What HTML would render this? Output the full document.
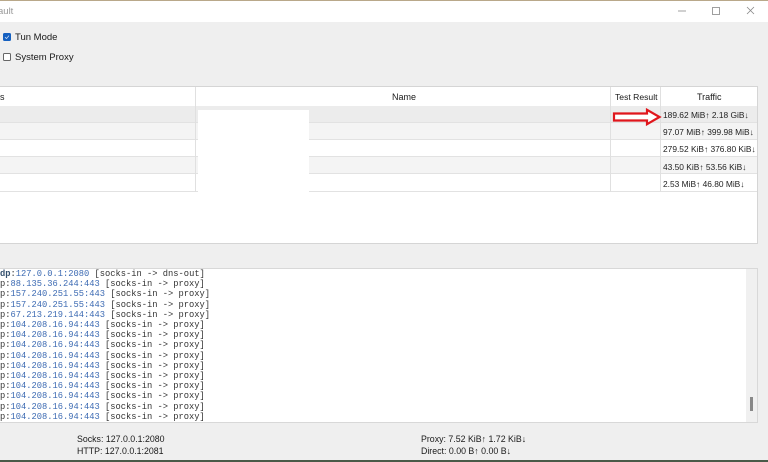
<!DOCTYPE html>
<html><head><style>
*{margin:0;padding:0;box-sizing:border-box}
body{width:768px;height:462px;background:#efefef;font-family:"Liberation Sans",sans-serif;font-size:9px;color:#1a1a1a;position:relative;overflow:hidden}
.a{position:absolute}
.mono{font-family:"Liberation Mono",monospace;font-size:8.75px;line-height:10.2px;white-space:pre;color:#333}
.b{color:#3d6bb3}
.row{position:absolute;left:0;width:757px;height:17px;border-bottom:1px solid #e2e2e2}
.tr{position:absolute;left:663px;font-size:8.4px;color:#222}
</style></head><body>
<div class="a" style="left:0;top:0;width:768px;height:1px;background:#b9a88a"></div>
<div class="a" style="left:0;top:1px;width:768px;height:21px;background:#fff"></div>
<div class="a" style="left:-2px;top:6px;color:#999;font-size:9.5px">ault</div>
<svg class="a" style="left:678px;top:5px" width="80" height="12"><line x1="0" y1="6" x2="8" y2="6" stroke="#888" stroke-width="0.8"/><rect x="34.5" y="2.5" width="7" height="7" fill="none" stroke="#888" stroke-width="0.8"/><path d="M69 2 L76 9 M76 2 L69 9" stroke="#888" stroke-width="0.8"/></svg>
<svg class="a" style="left:3px;top:33px" width="8" height="8"><rect width="8" height="8" rx="1.5" fill="#1560c0"/><path d="M2 4.2 L3.5 5.6 L6 2.6" fill="none" stroke="#cfe0f5" stroke-width="0.8"/></svg>
<div class="a" style="left:15px;top:32px;font-size:9.5px">Tun Mode</div>
<div class="a" style="left:3px;top:53px;width:8px;height:8px;border:1px solid #666;border-radius:1.5px;background:#fff"></div>
<div class="a" style="left:15px;top:52px;font-size:9.5px">System Proxy</div>

<div class="a" style="left:0;top:86px;width:758px;height:158px;background:#fff;border:1px solid #d5d5d5;border-left:none"></div>
<div class="row" style="top:106px;background:#ececec"></div>
<div class="row" style="top:123px;background:#f4f4f4"></div>
<div class="row" style="top:140px;background:#fff"></div>
<div class="row" style="top:157px;background:#f4f4f4"></div>
<div class="row" style="top:175px;background:#fff"></div>
<div class="a" style="left:195px;top:87px;width:1px;height:105px;background:#e0e0e0"></div>
<div class="a" style="left:610px;top:87px;width:1px;height:105px;background:#e0e0e0"></div>
<div class="a" style="left:660px;top:87px;width:1px;height:105px;background:#e0e0e0"></div>
<div class="a" style="left:198px;top:110px;width:111px;height:82px;background:#fff"></div>
<div class="a" style="left:0;top:92px">s</div>
<div class="a" style="left:392px;top:92px">Name</div>
<div class="a" style="left:615px;top:92px;font-size:8.6px">Test Result</div>
<div class="a" style="left:697px;top:92px">Traffic</div>
<div class="tr" style="top:110px">189.62 MiB↑ 2.18 GiB↓</div>
<div class="tr" style="top:127px">97.07 MiB↑ 399.98 MiB↓</div>
<div class="tr" style="top:144px">279.52 KiB↑ 376.80 KiB↓</div>
<div class="tr" style="top:162px">43.50 KiB↑ 53.56 KiB↓</div>
<div class="tr" style="top:179px">2.53 MiB↑ 46.80 MiB↓</div>
<svg class="a" style="left:612px;top:108px" width="50" height="18"><path d="M2 5.5 H35 V1.8 L47.5 9 L35 16.2 V12.5 H2 Z" fill="#fff" stroke="#e0161c" stroke-width="2.2"/></svg>

<div class="a" style="left:0;top:268px;width:758px;height:155px;background:#fff;border:1px solid #d8d8d8;border-left:none"></div>
<div class="a" style="left:746px;top:269px;width:11px;height:153px;background:#f0f0f0"></div>
<div class="a" style="left:750px;top:397px;width:3px;height:14px;background:#888"></div>
<div class="a mono" style="left:0;top:269px"><b style="color:#34506e">dp</b>:<span class="b">127.0.0.1:2080</span> [socks-in -&gt; dns-out]
p:<span class="b">88.135.36.244:443</span> [socks-in -&gt; proxy]
p:<span class="b">157.240.251.55:443</span> [socks-in -&gt; proxy]
p:<span class="b">157.240.251.55:443</span> [socks-in -&gt; proxy]
p:<span class="b">67.213.219.144:443</span> [socks-in -&gt; proxy]
p:<span class="b">104.208.16.94:443</span> [socks-in -&gt; proxy]
p:<span class="b">104.208.16.94:443</span> [socks-in -&gt; proxy]
p:<span class="b">104.208.16.94:443</span> [socks-in -&gt; proxy]
p:<span class="b">104.208.16.94:443</span> [socks-in -&gt; proxy]
p:<span class="b">104.208.16.94:443</span> [socks-in -&gt; proxy]
p:<span class="b">104.208.16.94:443</span> [socks-in -&gt; proxy]
p:<span class="b">104.208.16.94:443</span> [socks-in -&gt; proxy]
p:<span class="b">104.208.16.94:443</span> [socks-in -&gt; proxy]
p:<span class="b">104.208.16.94:443</span> [socks-in -&gt; proxy]
p:<span class="b">104.208.16.94:443</span> [socks-in -&gt; proxy]</div>

<div class="a" style="left:77px;top:433px;font-size:8.8px;line-height:12px">Socks: 127.0.0.1:2080<br>HTTP: 127.0.0.1:2081</div>
<div class="a" style="left:421px;top:433px;font-size:8.8px;line-height:12px">Proxy: 7.52 KiB↑ 1.72 KiB↓<br>Direct: 0.00 B↑ 0.00 B↓</div>
<div class="a" style="left:0;top:460px;width:768px;height:2px;background:#4a5a48"></div>
</body></html>
